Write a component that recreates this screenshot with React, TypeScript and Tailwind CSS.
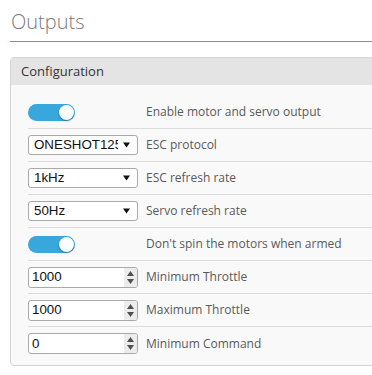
import type { FC } from "react";

type Row =
  | { kind: "toggle"; label: string }
  | { kind: "select"; label: string; value: string }
  | { kind: "number"; label: string; value: string };

const rows: Row[] = [
  { kind: "toggle", label: "Enable motor and servo output" },
  { kind: "select", label: "ESC protocol", value: "ONESHOT125" },
  { kind: "select", label: "ESC refresh rate", value: "1kHz" },
  { kind: "select", label: "Servo refresh rate", value: "50Hz" },
  { kind: "toggle", label: "Don't spin the motors when armed" },
  { kind: "number", label: "Minimum Throttle", value: "1000" },
  { kind: "number", label: "Maximum Throttle", value: "1000" },
  { kind: "number", label: "Minimum Command", value: "0" }
];

const Toggle: FC = () => (
  <div className="relative h-[17px] w-[47px] rounded-full bg-[#37a7dc]">
    <div className="absolute right-[1px] top-[1px] h-[15px] w-[15px] rounded-full bg-white shadow-[0_1px_2px_rgba(0,0,0,0.35)]" />
  </div>
);

const Select: FC<{ value: string }> = ({ value }) => (
  <div className="flex h-[20px] w-[110px] items-center rounded-[3px] border border-[#a9a9a9] bg-white pl-[5px] pr-[7px] font-['Liberation_Sans',sans-serif] text-[13.33px] text-[#111]">
    <span className="flex-1 overflow-hidden whitespace-nowrap leading-none">{value}</span>
    <svg width="7" height="6" viewBox="0 0 7 6" className="ml-[5px] shrink-0">
      <path d="M0 0.5 L7 0.5 L3.5 5.5 Z" fill="#111" />
    </svg>
  </div>
);

const NumberInput: FC<{ value: string }> = ({ value }) => (
  <div className="flex h-[21px] w-[110px] items-stretch overflow-hidden rounded-[3px] border border-[#a9a9a9] bg-white font-['Liberation_Sans',sans-serif] text-[13.33px] text-[#111]">
    <span className="flex flex-1 items-center pl-[3px] leading-none">{value}</span>
    <div className="flex w-[13px] flex-col items-center justify-center gap-[3px] bg-[#ececec]">
      <svg width="7" height="5" viewBox="0 0 7 5">
        <path d="M0 5 L3.5 0 L7 5 Z" fill="#505050" />
      </svg>
      <svg width="7" height="5" viewBox="0 0 7 5">
        <path d="M0 0 L7 0 L3.5 5 Z" fill="#505050" />
      </svg>
    </div>
  </div>
);

const App: FC = () => {
  return (
    <div className="h-[375px] w-[372px] overflow-hidden bg-white pl-[10px] font-['Open_Sans',sans-serif]">
      <div className="border-b border-[#37a8db] pb-[5px] pt-[8px]">
        <h1 className="pl-[1px] text-[20px] font-light leading-[28px] text-[#7a7a7a]">
          Outputs
        </h1>
      </div>

      <div className="mt-[15px] w-[380px] overflow-hidden rounded-[4px] border border-[#d4d4d4] bg-[#f9f9f9]">
        <div className="flex h-[27px] items-center bg-[#e4e4e4] pl-[10px] text-[13px] text-[#333]">
          Configuration
        </div>
        <div className="pb-[5px] pl-[17px] pt-[11px]">
          {rows.map((row, i) => (
            <div
              key={row.label}
              className={`flex h-[33px] items-center gap-[8px] ${
                i < rows.length - 1 ? "border-b border-[#dcdcdc]" : ""
              }`}
            >
              <div className="flex w-[110px] items-center">
                {row.kind === "toggle" && <Toggle />}
                {row.kind === "select" && <Select value={row.value} />}
                {row.kind === "number" && <NumberInput value={row.value} />}
              </div>
              <span className="text-[12px] text-[#5a5a5a]">{row.label}</span>
            </div>
          ))}
        </div>
      </div>
    </div>
  );
};

export default App;
